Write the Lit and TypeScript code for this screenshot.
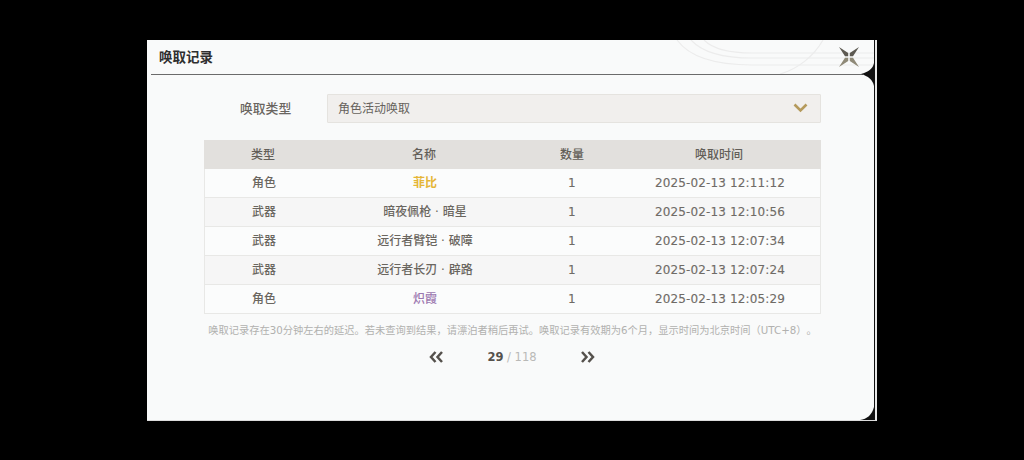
import { LitElement, html, css, svg } from "lit";
import { customElement } from "lit/decorators.js";

const ROWS = [
  ["角色", "菲比", "1", "2025-02-13 12:11:12", "gold"],
  ["武器", "暗夜佩枪 · 暗星", "1", "2025-02-13 12:10:56", ""],
  ["武器", "远行者臂铠 · 破障", "1", "2025-02-13 12:07:34", ""],
  ["武器", "远行者长刃 · 辟路", "1", "2025-02-13 12:07:24", ""],
  ["角色", "炽霞", "1", "2025-02-13 12:05:29", "purple"],
];

@customElement("app-root")
export class AppRoot extends LitElement {
  static styles = css`
    :host { display: block; width: 1024px; height: 460px; background: #000; overflow: hidden;
      font-family: "DejaVu Sans", "Noto Sans CJK SC", sans-serif; color: #5f5b56; text-spacing-trim: space-all; }
    .stage { padding: 40px 147px 0 147px; }
    .panel { position: relative; width: 730px; height: 381px; box-sizing: border-box; background: #f9fafa;
      border-right: 2px solid #e9e9e9; border-bottom: 1px solid #dcdcdc; }
    .panel::after { content: ""; position: absolute; top: 0; bottom: 0; right: 0; width: 1px; background: #111; }
    .header { height: 35px; box-sizing: border-box; margin-left: 4px; margin-right: 12px; border-bottom: 1px solid #6b6b6b; display: flex; align-items: center; padding-bottom: 2px; }
    .title { margin-left: 8px; font-size: 13.5px; font-weight: 700; color: #2f2f2f; }
    .decor { position: absolute; left: 515px; top: 0; }
    .close { position: absolute; left: 692px; top: 7px; }
    .notch { position: absolute; right: 1px; top: 23px; }
    .corner { position: absolute; right: 1px; bottom: 0; }
    .body { padding: 19px 54px 0 57px; }
    .filter { display: flex; align-items: center; height: 29px; margin-bottom: 17px; }
    .filter-label { width: 123px; padding: 0 0 2px 36px; box-sizing: border-box; font-size: 12.8px; font-weight: 500; color: #6a655f; }
    .select { flex: 1; height: 29px; box-sizing: border-box; background: #f1efed; border: 1px solid #e5e3df;
      border-radius: 1px; display: flex; align-items: center; justify-content: space-between; padding: 0 12px 2px 10px;
      font-size: 12px; color: #66625c; }
    .row { display: grid; grid-template-columns: 118px 204px 92px 202px; height: 29px; box-sizing: border-box;
      align-items: center; text-align: center; font-size: 12px; font-weight: 500; color: #6a665f;
      border: 1px solid #e8e8e6; border-top: 0; background: #fbfcfc; padding-bottom: 3px; }
    .row.alt { background: #f6f6f6; }
    .row.head { background: #e2e0dd; border: 0; color: #625e58; padding-bottom: 2px; }
    .num { font-size: 12px; margin-top: 3px; letter-spacing: .13px; -webkit-text-stroke: .12px currentColor; color: #6f6b66; }
    .qty { padding-right: 2px; }
    .gold { color: #e5b637; font-weight: 700; }
    .purple { color: #9b78b0; }
    .note { margin-top: 8px; text-align: center; font-size: 10.25px; color: #b1b1af; line-height: 16px; white-space: nowrap; }
    .pager { display: flex; align-items: center; margin-top: 9px; height: 20px; padding-left: 225px; }
    .count { width: 138px; text-align: center; font-size: 11.5px; font-weight: 700; color: #55514c; padding-bottom: 1px; }
    .count span { color: #b9b9b7; font-weight: 400; }
  `;

  private chev(flip: boolean) {
    return html`<svg width="14" height="12" viewBox="0 0 14 12" style=${flip ? "transform:scaleX(-1)" : ""}>
      <path d="M1 1 L5.5 6 L1 11 M7.5 1 L12 6 L7.5 11" fill="none" stroke="#55514c" stroke-width="2.5"/>
    </svg>`;
  }

  render() {
    return html`<div class="stage"><div class="panel">
      <svg class="decor" width="212" height="34" viewBox="0 0 212 34" fill="none" stroke="#ececec" stroke-width="1.2">
        ${[
          "M15 0 C28 18 55 25 90 25 H212",
          "M29 0 C40 12 60 18 90 18 H212",
          "M42 0 C50 8 65 13 90 13 H212",
          "M161 0 C152 16 136 29 118 34",
        ].map((d) => svg`<path d=${d}/>`)}
      </svg>
      <div class="header"><span class="title">唤取记录</span></div>
      <svg class="close" width="20" height="20" viewBox="0 0 20 20">
        <path d="M0 0 L9.2 6 L9.2 9.2 L6 9.2 Z M20 0 L14 9.2 L10.8 9.2 L10.8 6 Z" fill="#5d5a52"/>
        <path d="M0 20 L6 10.8 L9.2 10.8 L9.2 14 Z M20 20 L10.8 14 L10.8 10.8 L14 10.8 Z" fill="#8f8a78"/>
      </svg>
      <svg class="notch" width="13" height="23" viewBox="0 0 13 23">
        <path d="M13 0 V23 C12 17 7 13 0 11 C7 9 12 6 13 0 Z" fill="#111"/>
      </svg>
      <svg class="corner" width="14" height="13" viewBox="0 0 14 13">
        <path d="M14 0 V13 H0 C7 12 12 8 14 0 Z" fill="#111"/>
      </svg>
      <div class="body">
        <div class="filter">
          <div class="filter-label">唤取类型</div>
          <div class="select"><span>角色活动唤取</span>
            <svg width="15" height="10" viewBox="0 0 15 10"><path d="M1.5 1.5 L7.5 7.5 L13.5 1.5" fill="none" stroke="#b59a5c" stroke-width="2.6"/></svg>
          </div>
        </div>
        <div class="row head"><div>类型</div><div>名称</div><div>数量</div><div>唤取时间</div></div>
        ${ROWS.map((r, i) => html`<div class="row ${i % 2 ? "alt" : ""}">
          <div>${r[0]}</div><div class=${r[4]}>${r[1]}</div>
          <div class="num qty">${r[2]}</div><div class="num">${r[3]}</div></div>`)}
        <div class="note">唤取记录存在30分钟左右的延迟。若未查询到结果，请漂泊者稍后再试。唤取记录有效期为6个月，显示时间为北京时间（UTC+8）。</div>
        <div class="pager">${this.chev(true)}<div class="count">29<span> / 118</span></div>${this.chev(false)}</div>
      </div>
    </div></div>`;
  }
}
